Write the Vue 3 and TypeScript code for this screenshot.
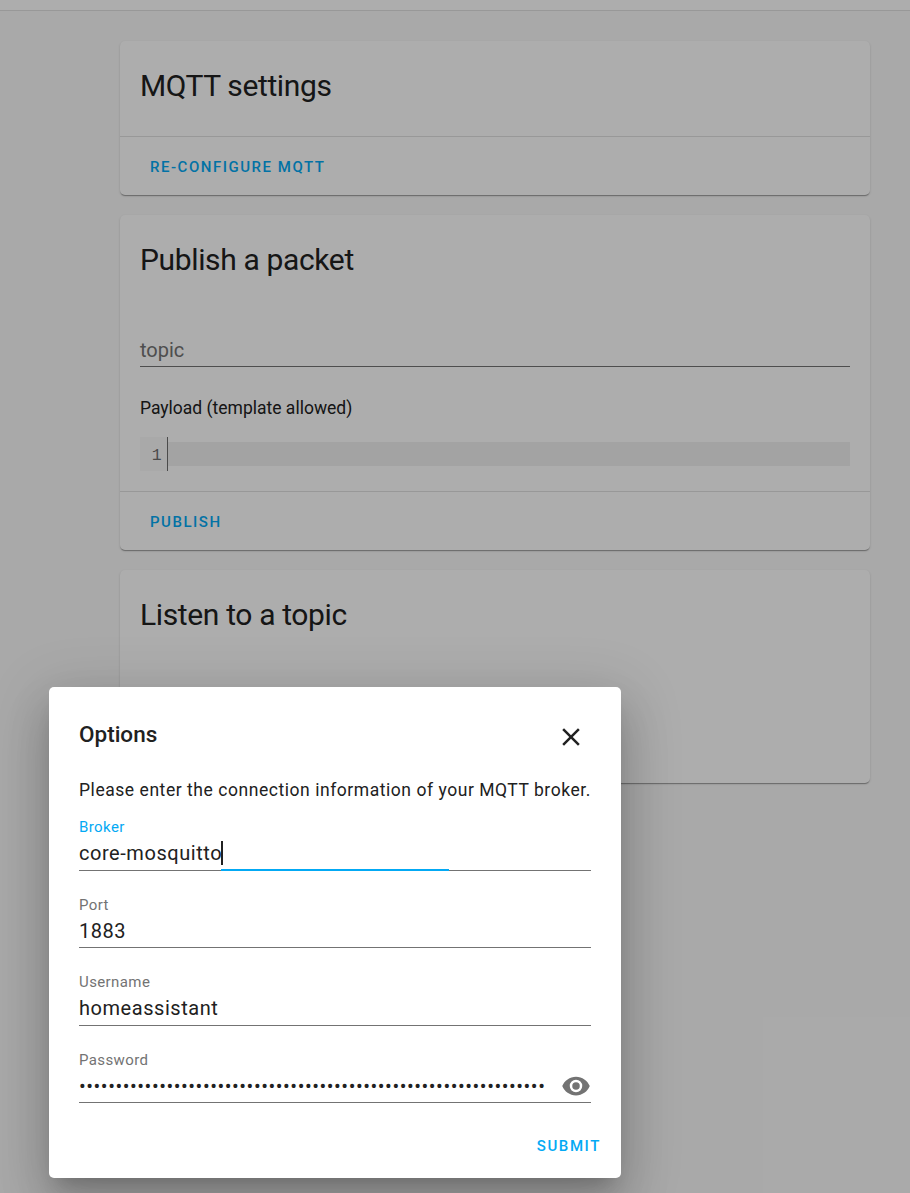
<script setup lang="ts">
interface Field {
  id: string
  label: string
  value: string
  focused?: boolean
  secret?: boolean
}

const fields: Field[] = [
  { id: 'broker', label: 'Broker', value: 'core-mosquitto', focused: true },
  { id: 'port', label: 'Port', value: '1883' },
  { id: 'username', label: 'Username', value: 'homeassistant' },
  { id: 'password', label: 'Password', value: '•'.repeat(64), secret: true },
]
</script>

<template>
  <div class="page">
    <header class="toolbar"></header>
    <main class="content">
      <section class="card">
        <h1 class="card-title first">MQTT settings</h1>
        <div class="card-actions"><button class="btn">RE-CONFIGURE MQTT</button></div>
      </section>

      <section class="card">
        <h1 class="card-title">Publish a packet</h1>
        <div class="card-body">
          <div class="topic">topic</div>
          <p class="payload-label">Payload (template allowed)</p>
          <div class="editor">
            <span class="gutter">1</span>
            <div class="active-line"></div>
          </div>
        </div>
        <div class="card-actions"><button class="btn">PUBLISH</button></div>
      </section>

      <section class="card listen">
        <h1 class="card-title">Listen to a topic</h1>
      </section>
    </main>

    <div class="scrim"></div>

    <div class="dialog" role="dialog" aria-label="Options">
      <div class="dialog-head">
        <h2 class="dialog-title">Options</h2>
        <svg class="close" viewBox="0 0 24 24">
          <path d="M19,6.41L17.59,5L12,10.59L6.41,5L5,6.41L10.59,12L5,17.59L6.41,19L12,13.41L17.59,19L19,17.59L13.41,12L19,6.41Z" />
        </svg>
      </div>
      <p class="description">Please enter the connection information of your MQTT broker.</p>
      <div class="fields">
        <div v-for="f in fields" :key="f.id" class="field" :class="{ focused: f.focused, secret: f.secret }">
          <span class="label">{{ f.label }}</span>
          <div class="row">
            <span class="value">{{ f.value }}</span>
            <i v-if="f.focused" class="caret"></i>
            <svg v-if="f.secret" class="eye" viewBox="0 0 24 24">
              <path d="M12,9A3,3 0 0,0 9,12A3,3 0 0,0 12,15A3,3 0 0,0 15,12A3,3 0 0,0 12,9M12,17A5,5 0 0,1 7,12A5,5 0 0,1 12,7A5,5 0 0,1 17,12A5,5 0 0,1 12,17M12,4.5C7,4.5 2.73,7.61 1,12C2.73,16.39 7,19.5 12,19.5C17,19.5 21.27,16.39 23,12C21.27,7.61 17,4.5 12,4.5Z" />
            </svg>
          </div>
          <i v-if="f.focused" class="focus-line"></i>
        </div>
      </div>
      <div class="dialog-actions"><button class="btn submit">SUBMIT</button></div>
    </div>
  </div>
</template>

<style>
body {
  margin: 0;
  overflow: hidden;
}
</style>

<style scoped>
.page {
  position: relative;
  box-sizing: border-box;
  height: 1193px;
  overflow: hidden;
  background: #fafafa;
  color: #212121;
  font-family: Roboto, "Liberation Sans", sans-serif;
}
.toolbar {
  height: 10px;
  background: #fff;
  border-bottom: 1px solid #e0e0e0;
}
.content {
  display: flex;
  flex-direction: column;
  gap: 20px;
  width: 750px;
  margin: 30px 0 0 120px;
}
.card {
  background: #fff;
  border-radius: 5px;
  box-shadow: 0 2px 1px -1px rgba(0, 0, 0, 0.2), 0 1px 1px 0 rgba(0, 0, 0, 0.14),
    0 1px 3px 0 rgba(0, 0, 0, 0.12);
}
.card-title {
  margin: 0;
  padding: 20px 20px 21px;
  font-size: 30px;
  font-weight: 400;
  line-height: 50px;
  letter-spacing: -0.36px;
}
.card-title.first {
  padding-bottom: 25px;
}
.card-body {
  padding: 0 20px 20px;
}
.topic {
  height: 33px;
  margin-top: 27px;
  border-bottom: 1px solid #737373;
  color: #737373;
  font-size: 20px;
  line-height: 34px;
}
.payload-label {
  margin: 29px 0 17px;
  font-size: 17.5px;
  line-height: 24px;
}
.editor {
  display: flex;
  align-items: flex-start;
  height: 34px;
}
.gutter {
  box-sizing: border-box;
  width: 28px;
  height: 34px;
  padding-right: 5.3px;
  background: #fafafa;
  border-right: 1px solid #6f6f6f;
  color: #6f6f6f;
  font: 16.5px/37px "Liberation Mono", monospace;
  text-align: right;
}
.active-line {
  flex: 1;
  height: 24px;
  margin-top: 5px;
  background: #f0f0f0;
}
.card-actions {
  height: 58px;
  padding-left: 30px;
  border-top: 1px solid #e0e0e0;
}
.btn {
  padding: 0;
  border: 0;
  background: none;
  color: #03a9f4;
  font: 500 15px/60px Roboto, sans-serif;
  letter-spacing: 1.53px;
}
.listen {
  height: 213px;
}
.scrim {
  position: absolute;
  inset: 0;
  background: rgba(0, 0, 0, 0.32);
}
.dialog {
  position: absolute;
  left: 49px;
  top: 687px;
  box-sizing: border-box;
  width: 572px;
  height: 491px;
  padding: 30px 30px 0;
  background: #fff;
  border-radius: 5px;
  box-shadow: 0 13.75px 18.75px -8.75px rgba(0, 0, 0, 0.2), 0 30px 47.5px 3.75px rgba(0, 0, 0, 0.14),
    0 11.25px 57.5px 10px rgba(0, 0, 0, 0.12);
}
.dialog-head {
  display: flex;
  justify-content: space-between;
  height: 56px;
}
.dialog-title {
  margin: 0;
  font-size: 22.5px;
  font-weight: 500;
  line-height: 35px;
}
.close {
  width: 30px;
  height: 30px;
  margin: 5px 5px 0 0;
  fill: #212121;
}
.description {
  margin: 0;
  font-size: 17.5px;
  line-height: 34px;
  letter-spacing: 0.547px;
  white-space: nowrap;
}
.fields {
  display: flex;
  flex-direction: column;
  gap: 20.5px;
  margin-top: 6.9px;
}
.field {
  position: relative;
  box-sizing: border-box;
  height: 57px;
  padding-top: 3.3px;
  border-bottom: 1px solid #737373;
}
.label {
  display: block;
  height: 21px;
  color: #737373;
  font-size: 15px;
  line-height: 20px;
  letter-spacing: 0.4px;
}
.focused .label {
  color: #03a9f4;
}
.row {
  display: flex;
  align-items: center;
  height: 30px;
}
.value {
  font-size: 20px;
  line-height: 30px;
  letter-spacing: 0.55px;
  white-space: nowrap;
}
.secret .value {
  letter-spacing: 0.54px;
}
.caret {
  width: 2px;
  height: 24px;
  margin-left: -1px;
  background: #212121;
}
.focus-line {
  position: absolute;
  left: 142px;
  bottom: -1px;
  width: 228px;
  height: 2px;
  background: #03a9f4;
}
.eye {
  flex: none;
  width: 30px;
  height: 30px;
  margin-left: auto;
  fill: #737373;
}
.dialog-actions {
  display: flex;
  justify-content: flex-end;
  margin: 13px -10px 0 0;
}
.submit {
  letter-spacing: 1.6px;
}
</style>
